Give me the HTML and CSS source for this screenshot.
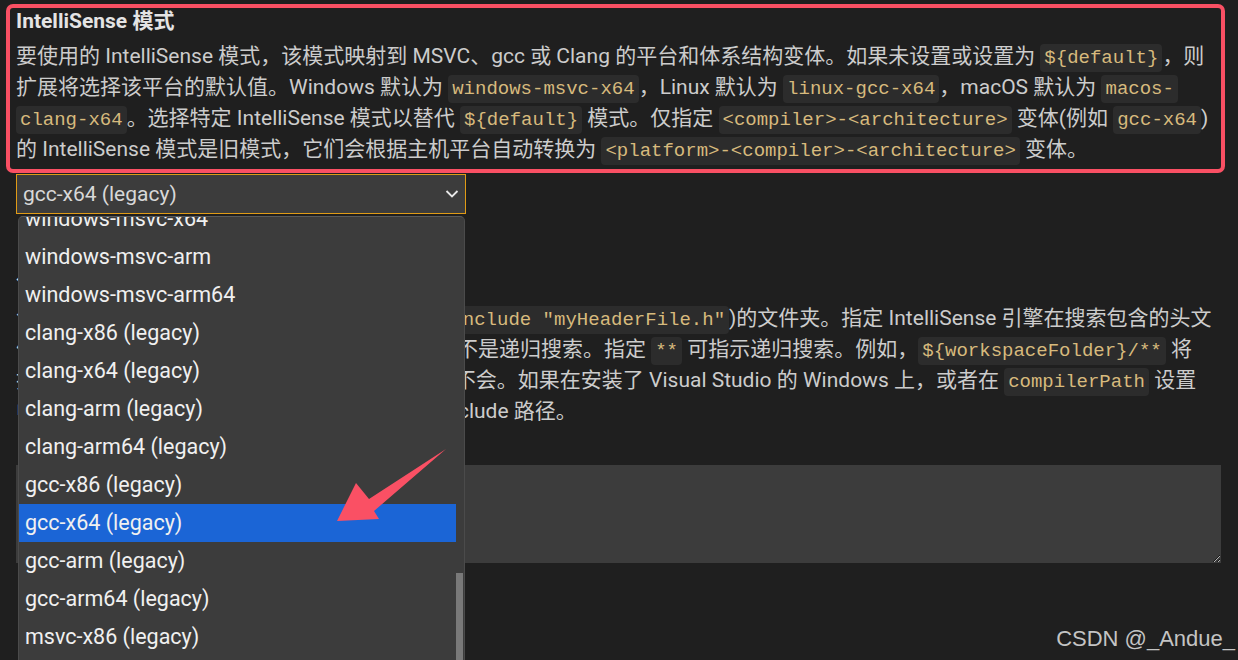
FILE: index.html
```html
<!DOCTYPE html>
<html lang="zh-CN">
<head>
  <meta charset="UTF-8">
  <title>C/C++ 配置</title>
  <link rel="stylesheet" href="styles.css">
</head>
<body>
  <div class="setting focused">
    <h3 class="setting-title">IntelliSense 模式</h3>
    <p class="setting-desc">
      要使用的 IntelliSense 模式，该模式映射到 MSVC、gcc 或 Clang 的平台和体系结构变体。如果未设置或设置为 <code>${default}</code>，则<br>
      扩展将选择该平台的默认值。Windows 默认为 <code>windows-msvc-x64</code>，Linux 默认为 <code>linux-gcc-x64</code>，macOS 默认为 <code>macos-</code><br>
      <code>clang-x64</code>。选择特定 IntelliSense 模式以替代 <code>${default}</code> 模式。仅指定 <code>&lt;compiler&gt;-&lt;architecture&gt;</code> 变体(例如 <code>gcc-x64</code>)<br>
      的 IntelliSense 模式是旧模式，它们会根据主机平台自动转换为 <code>&lt;platform&gt;-&lt;compiler&gt;-&lt;architecture&gt;</code> 变体。
    </p>
  </div>

  <div class="select-wrap">
    <div class="select">
      <span>gcc-x64 (legacy)</span>
      <svg class="chevron" width="14" height="10" viewBox="0 0 14 10">
        <polyline points="1.5,2 7,7.5 12.5,2" fill="none" stroke="#e8e8e8" stroke-width="1.8"/>
      </svg>
    </div>
    <div class="dropdown">
      <ul class="options">
        <li>windows-msvc-x64</li>
        <li>windows-msvc-arm</li>
        <li>windows-msvc-arm64</li>
        <li>clang-x86 (legacy)</li>
        <li>clang-x64 (legacy)</li>
        <li>clang-arm (legacy)</li>
        <li>clang-arm64 (legacy)</li>
        <li>gcc-x86 (legacy)</li>
        <li class="selected">gcc-x64 (legacy)</li>
        <li>gcc-arm (legacy)</li>
        <li>gcc-arm64 (legacy)</li>
        <li>msvc-x86 (legacy)</li>
        <li>msvc-x64 (legacy)</li>
      </ul>
      <div class="scroll-track"><div class="scroll-thumb"></div></div>
    </div>
  </div>

  <div class="setting">
    <h3 class="setting-title">包含路径</h3>
    <p class="setting-desc">
      包含路径是指包含源文件中包含的头文件（如<code>#include "myHeaderFile.h"</code>)的文件夹。指定 IntelliSense 引擎在搜索包含的头文<br>
      件时要使用的路径列表。对这些路径进行的搜索不是递归搜索。指定 <code>**</code> 可指示递归搜索。例如，<code>${workspaceFolder}/**</code> 将<br>
      搜索所有的子目录，而&nbsp; <code>${workspaceFolder}</code> 不会。如果在安装了 Visual Studio 的 Windows 上，或者在 <code>compilerPath</code> 设置<br>
      中指定了编译器，则无需在此列表中列出系统 include 路径。
    </p>
    <textarea class="setting-input"></textarea>
  </div>

  <svg class="arrow" width="120" height="80" viewBox="330 445 120 80">
    <polygon points="337,521 356,483 369,499 446,449 374,511 379,519" fill="#fa5064"/>
  </svg>

  <div class="watermark">CSDN @_Andue_</div>
</body>
</html>
```

FILE: styles.css
```css
body {
  margin: 0;
  height: 660px;
  overflow: hidden;
  position: relative;
  background: #1f1f1f;
  color: #cccccc;
  font-family: Roboto, "Noto Sans CJK SC", sans-serif;
  font-size: 21px;
}

/* settings rows */
.setting {
  margin: 56px 17px 0 16px;
}
.setting.focused {
  margin: 4px 13px 0 6px;
  padding: 0 10px 4px 6px;
  border: 4px solid #fa5064;
  border-radius: 7px;
}
.setting-title {
  margin: 0;
  font-size: 21px;
  font-weight: 700;
  line-height: 26px;
  color: #e4e4e4;
}
.setting-desc {
  margin: 7px 0 0;
  line-height: 31px;
  white-space: nowrap;
}
code {
  font-family: "Liberation Mono", monospace;
  font-size: 19px;
  line-height: 1;
  color: #d7ba7d;
  background: #2c2c2c;
  padding: 3px 4px;
  border-radius: 4px;
}
.setting-input {
  display: block;
  box-sizing: border-box;
  width: 100%;
  height: 98px;
  margin-top: 38px;
  border: none;
  background: #3c3c3c;
  color-scheme: dark;
  resize: vertical;
}

/* select + open dropdown */
.select-wrap {
  position: relative;
  width: 450px;
  margin: 1px 0 0 16px;
}
.select {
  box-sizing: border-box;
  height: 40px;
  display: flex;
  align-items: center;
  justify-content: space-between;
  padding: 0 6px;
  border: 1px solid #e09b16;
  background: #3c3c3c;
  color: #d8d8d8;
  font-size: 21px;
}
.chevron {
  display: block;
}
.dropdown {
  position: absolute;
  top: 42px;
  left: 2px;
  width: 447px;
  height: 450px;
  box-sizing: border-box;
  display: flex;
  overflow: hidden;
  background: #3c3c3c;
  border: 1px solid #4b4b4b;
  border-top-color: #5a5a5a;
  border-radius: 5px 5px 0 0;
  z-index: 2;
}
.options {
  flex: 1;
  list-style: none;
  margin: -17px 0 0;
  padding: 0;
}
.options li {
  height: 38px;
  line-height: 38px;
  padding-left: 6px;
  color: #f0f0f0;
  font-size: 21.5px;
}
.options li.selected {
  background: #1b65d6;
}
.scroll-track {
  width: 8px;
}
.scroll-thumb {
  width: 7px;
  height: 200px;
  margin-top: 356px;
  background: #797979;
}

/* annotation on top */
.arrow {
  position: absolute;
  left: 330px;
  top: 445px;
  z-index: 3;
}
.watermark {
  position: absolute;
  right: 3px;
  top: 626px;
  font-family: "Liberation Sans", Arial, sans-serif;
  font-size: 22px;
  line-height: 26px;
  color: #c4c4c4;
}
```
